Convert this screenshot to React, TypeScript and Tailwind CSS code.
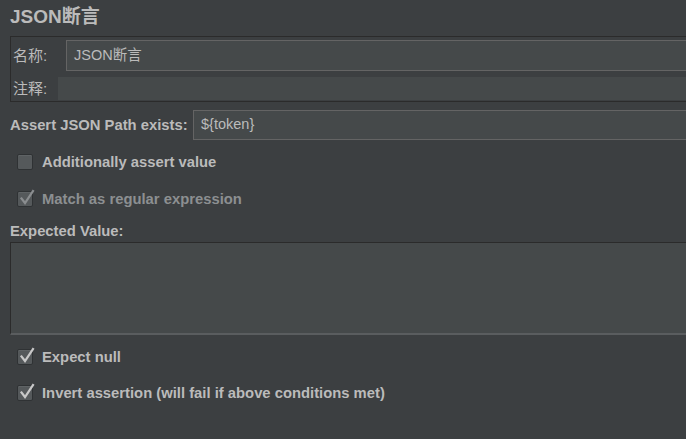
const FONT = "font-['Liberation_Sans','Noto_Sans_CJK_SC',sans-serif]";

function CheckBox({ checked, disabled }: { checked?: boolean; disabled?: boolean }) {
  return (
    <div className="relative w-[16px] h-[16px] shrink-0 rounded-[2px] border border-[#2f3234] bg-[#55595b] shadow-[inset_0_1px_0_#5f6365]">
      {checked && (
        <svg
          className="absolute left-[1px] top-[-4px] overflow-visible"
          width="16"
          height="18"
          viewBox="0 0 16 18"
        >
          <path
            d="M2.5 10.5 L6 15 L14 3"
            fill="none"
            stroke={disabled ? "#8a8d8f" : "#c8c8c8"}
            strokeWidth="2.2"
            strokeLinecap="square"
          />
        </svg>
      )}
    </div>
  );
}

function CheckRow({
  label,
  checked,
  disabled,
  className,
}: {
  label: string;
  checked?: boolean;
  disabled?: boolean;
  className?: string;
}) {
  return (
    <div className={`flex items-center h-[16px] pl-[17px] gap-[9px] ${className ?? ""}`}>
      <CheckBox checked={checked} disabled={disabled} />
      <span
        className={`text-[14.8px] font-bold leading-none whitespace-nowrap ${
          disabled ? "text-[#8c8f91]" : "text-[#bbbbbb]"
        }`}
      >
        {label}
      </span>
    </div>
  );
}

export default function App() {
  return (
    <div className={`w-[686px] h-[439px] overflow-hidden bg-[#3c3f41] ${FONT} text-[#bbbbbb]`}>
      {/* title */}
      <div className="h-[36px] pl-[10px] pt-[6px] text-[19px] font-bold leading-[22px] text-[#bbbbbb] whitespace-nowrap">
        JSON断言
      </div>

      {/* name / comment panel */}
      <div className="ml-[10px] h-[66px] border-t border-l border-b border-[#2b2b2b] pt-[3px]">
        <div className="flex items-center h-[31px]">
          <span className="w-[55px] pl-[2px] text-[15px] leading-none whitespace-nowrap">名称:</span>
          <div className="flex-1 h-[31px] border-t border-b border-l border-[#646464] bg-[#45494a] flex items-center pl-[7px] text-[14.5px] text-[#bbbbbb] whitespace-nowrap">
            JSON断言
          </div>
        </div>
        <div className="flex items-center h-[23px] mt-[6px]">
          <span className="w-[47px] pl-[2px] text-[15px] leading-none whitespace-nowrap">注释:</span>
          <div className="flex-1 h-[23px] bg-[#45494a]" />
        </div>
      </div>

      {/* json path */}
      <div className="flex items-center mt-[8px] pl-[10px] h-[30px]">
        <span className="w-[183px] text-[14.8px] font-bold leading-none whitespace-nowrap">
          Assert JSON Path exists:
        </span>
        <div className="flex-1 h-[30px] border-t border-b border-l border-[#646464] bg-[#45494a] flex items-center pl-[7px] text-[14.5px] whitespace-nowrap">
          {"${token}"}
        </div>
      </div>

      <CheckRow label="Additionally assert value" className="mt-[14px]" />
      <CheckRow label="Match as regular expression" checked disabled className="mt-[21px]" />

      <div className="mt-[16px] pl-[10px] text-[14.8px] font-bold leading-[16px] whitespace-nowrap">
        Expected Value:
      </div>
      <div className="ml-[10px] mt-[3px] h-[93px] border-t border-l border-[#2b2b2b] border-b-2 border-b-[#5a5d5f] bg-[#45494a]" />

      <CheckRow label="Expect null" checked className="mt-[14px]" />
      <CheckRow
        label="Invert assertion (will fail if above conditions met)"
        checked
        className="mt-[20px]"
      />
    </div>
  );
}
